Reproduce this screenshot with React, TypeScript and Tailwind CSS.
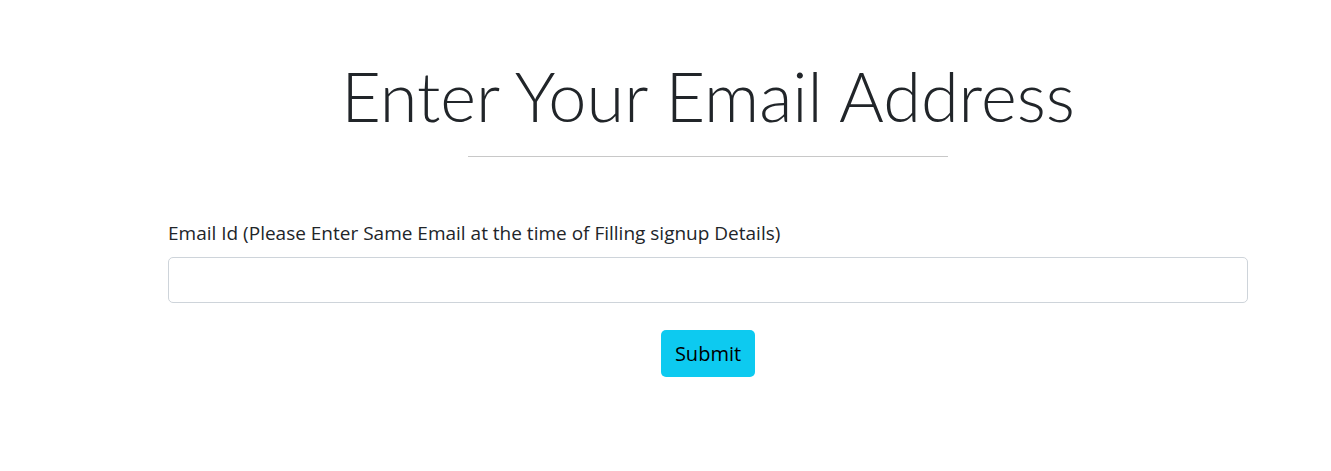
export default function App() {
  return (
    <main
      className="min-h-[471px] w-full bg-white text-[#212529]"
      style={{ fontFamily: '"Open Sans", "Noto Sans", sans-serif' }}
    >
      <div className="ml-[168px] w-[1080px] pt-[55px] flex flex-col">
        <h1
          className="text-center text-[68.5px] font-light leading-[1.2]"
          style={{ fontFamily: 'Lato, "Open Sans", sans-serif' }}
        >
          Enter Your Email Address
        </h1>
        <hr className="mx-auto mt-[19px] w-[480px] border-t border-[#c8c8c8]" />

        <form className="pt-[62px] flex flex-col">
          <label htmlFor="email" className="text-[19px] leading-[28px] mb-[10px]">
            Email Id (Please Enter Same Email at the time of Filling signup Details)
          </label>
          <input
            id="email"
            type="email"
            className="h-[46px] w-full rounded-[5px] border border-[#ced4da] px-4 text-[20px] outline-none"
          />
          <div className="flex justify-center pt-[27px]">
            <button
              type="button"
              className="h-[47px] w-[94px] rounded-[5px] bg-[#0dcaf0] text-[20px] text-black"
            >
              Submit
            </button>
          </div>
        </form>
      </div>
    </main>
  );
}
